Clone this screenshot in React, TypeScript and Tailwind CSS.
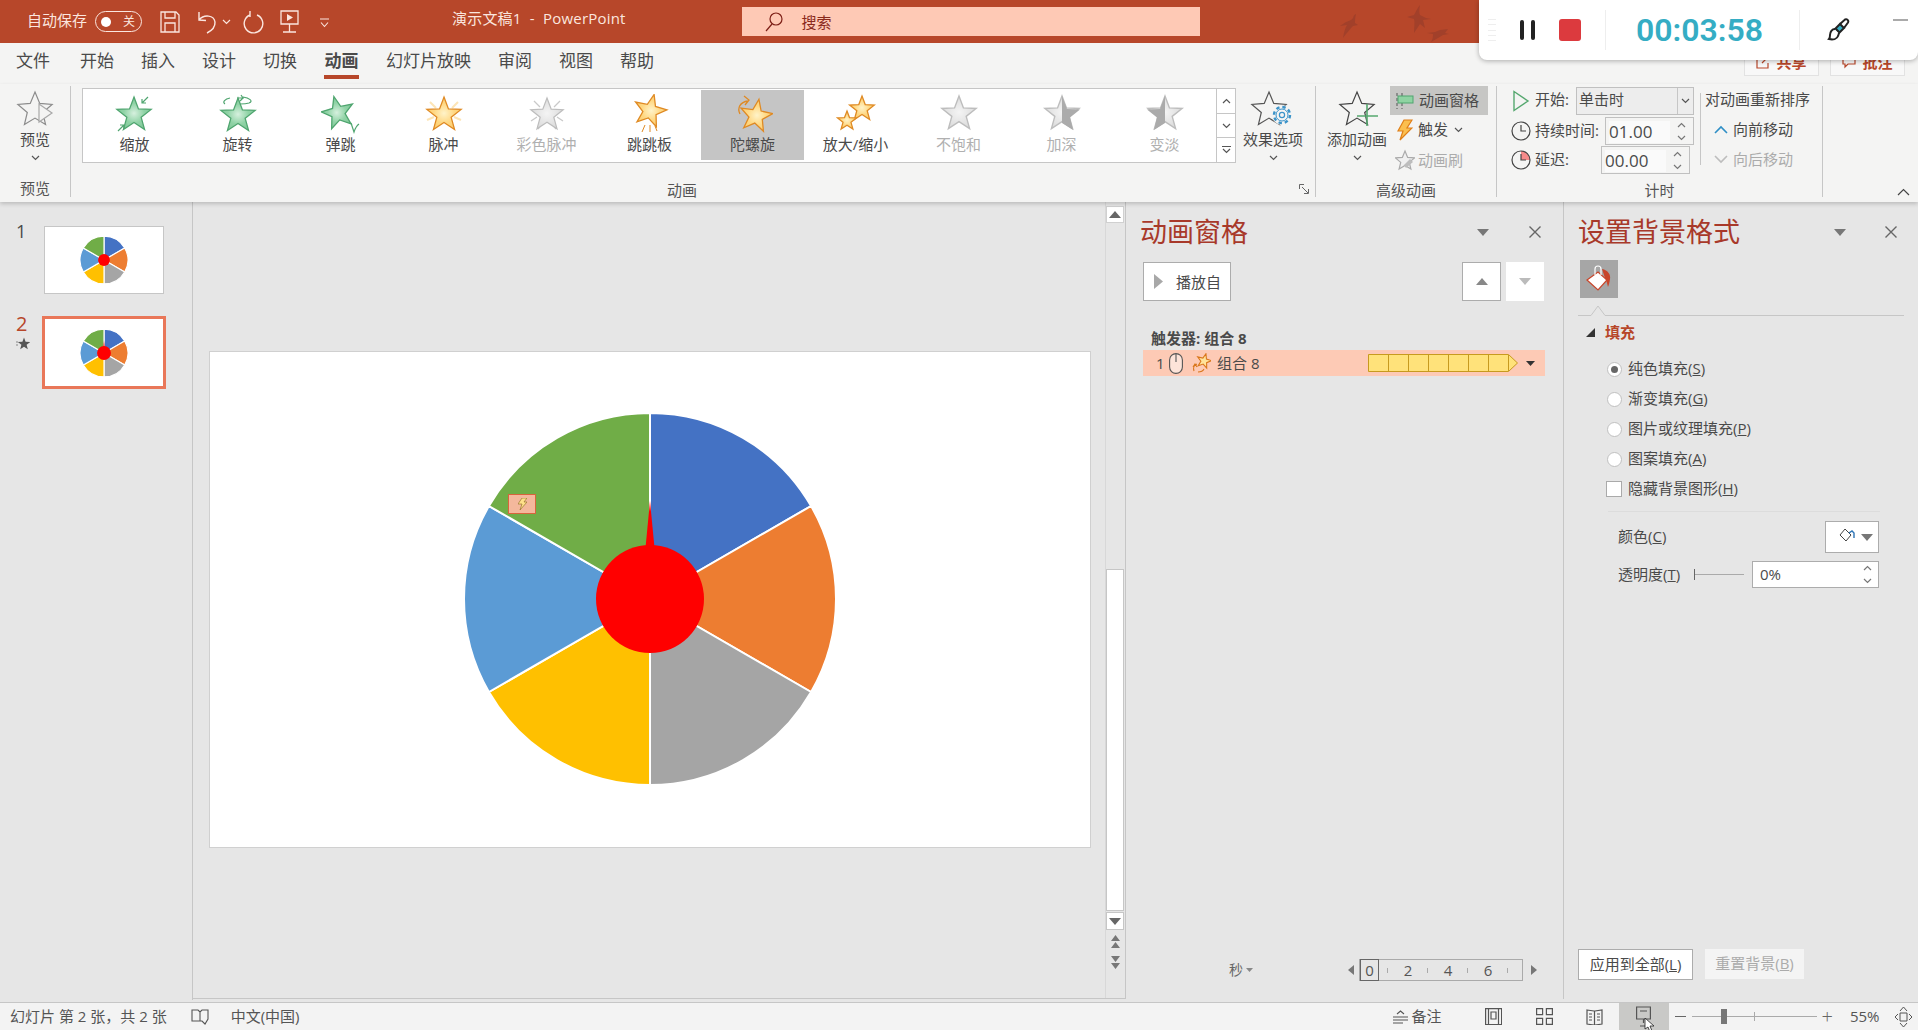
import React from "react";

const starPts = (cx: number, cy: number, R: number, rot = 0, ratio = 0.42) => {
  const p: string[] = [];
  for (let i = 0; i < 10; i++) {
    const r = i % 2 ? R * ratio : R;
    const a = ((-90 + rot + i * 36) * Math.PI) / 180;
    p.push(`${(cx + r * Math.cos(a)).toFixed(2)},${(cy + r * Math.sin(a)).toFixed(2)}`);
  }
  return p.join(" ");
};

const GREEN = { f: "url(#gGreen)", s: "#4fa56f" };
const ORANGE = { f: "url(#gOrange)", s: "#df8a24" };
const GRAY = { f: "url(#gGray)", s: "#bdbdbd" };

const Ico = ({ children }: { children: React.ReactNode }) => (
  <svg width="40" height="40" viewBox="0 0 40 40" fill="none">{children}</svg>
);

const Defs = () => (
  <svg className="absolute w-0 h-0">
    <defs>
      <radialGradient id="gGreen"><stop offset="0" stopColor="#d6f0de" /><stop offset="0.6" stopColor="#90d3a6" /><stop offset="1" stopColor="#82c99a" /></radialGradient>
      <radialGradient id="gOrange"><stop offset="0" stopColor="#fff3c9" /><stop offset="0.6" stopColor="#ffd883" /><stop offset="1" stopColor="#fdcf72" /></radialGradient>
      <radialGradient id="gGray"><stop offset="0" stopColor="#f4f4f4" /><stop offset="1" stopColor="#dcdcdc" /></radialGradient>
    </defs>
  </svg>
);

const GalleryItem = ({ label, dim, sel, children }: { label: string; dim?: boolean; sel?: boolean; children: React.ReactNode }) => (
  <div className={`w-[103px] h-[70px] flex flex-col items-center ${sel ? "bg-[#c5c5c5]" : ""}`}>
    <div className="mt-[4px] h-[40px]">{children}</div>
    <span className={`text-[15px] leading-[20px] ${dim ? "text-[#b0b0b0]" : "text-[#4a4a4a]"}`}>{label}</span>
  </div>
);

const Chev = ({ up, color = "#555" }: { up?: boolean; color?: string }) => (
  <svg width="9" height="6" viewBox="0 0 9 6" fill="none" stroke={color} strokeWidth="1.2">
    <path d={up ? "M1 5l3.5-3.5L8 5" : "M1 1l3.5 3.5L8 1"} />
  </svg>
);

const Tri = ({ color = "#777", up }: { color?: string; up?: boolean }) => (
  <svg width="12" height="7" viewBox="0 0 12 7"><path d={up ? "M0 7L6 0l6 7z" : "M0 0h12L6 7z"} fill={color} /></svg>
);

const X = () => (
  <svg width="12" height="12" viewBox="0 0 12 12" stroke="#666" strokeWidth="1.4"><path d="M0.5 0.5l11 11M11.5 0.5l-11 11" /></svg>
);

const Wheel = ({ size, stroke, red, pointer }: { size: number; stroke: number; red: number; pointer?: boolean }) => {
  const R = 186;
  const cols = ["#4472c4", "#ed7d31", "#a5a5a5", "#ffc000", "#5b9bd5", "#70ad47"];
  const pt = (deg: number) => {
    const a = (deg * Math.PI) / 180;
    return `${(R * Math.cos(a)).toFixed(2)} ${(R * Math.sin(a)).toFixed(2)}`;
  };
  return (
    <svg width={size} height={size} viewBox="-187 -187 374 374">
      {cols.map((c, i) => (
        <path key={c} d={`M0 0L${pt(-90 + i * 60)}A${R} ${R} 0 0 1 ${pt(-30 + i * 60)}Z`} fill={c} stroke="#fff" strokeWidth={stroke} />
      ))}
      {pointer && <path d="M-5 -46L0 -98L5 -46Z" fill="#ff0000" />}
      <circle r={red} fill="#ff0000" />
    </svg>
  );
};

const Radio = ({ on, children }: { on?: boolean; children: React.ReactNode }) => (
  <div className="h-[30px] flex items-center pl-[43px]">
    <span className="w-[15px] h-[15px] rounded-full bg-white border border-[#c0c0c0] flex items-center justify-center">
      {on && <span className="w-[7px] h-[7px] rounded-full bg-[#666]" />}
    </span>
    <span className="ml-[6px] -mt-[2px] text-[15px] leading-[20px] text-[#4a4a4a]">{children}</span>
  </div>
);

const Spin = () => (
  <div className="w-[22px] h-full flex flex-col items-center justify-center gap-[7px]">
    <Chev up color="#777" />
    <Chev color="#777" />
  </div>
);

const Tab = ({ t, cls }: { t: string; cls: string }) => (
  <span className={`mt-[6px] text-[17px] leading-[24px] text-[#4a4a4a] ${cls}`}>{t}</span>
);

export default function App() {
  return (
    <div className="relative w-[1918px] h-[1030px] overflow-hidden flex flex-col bg-[#e6e6e6] text-[#4a4a4a] font-['Open_Sans','Noto_Sans_CJK_SC',sans-serif]">
      <Defs />

      {/* title bar */}
      <div className="h-[43px] shrink-0 bg-[#b7472a] flex items-center text-[#fbe6df]">
        <span className="ml-[27px] -mt-[4px] w-[60px] text-[15px] leading-[20px]">自动保存</span>
        <div className="ml-[8px] w-[47px] h-[21px] rounded-full border border-[#fbe6df] flex items-center justify-between pl-[5px] pr-[6px]">
          <span className="w-[10px] h-[10px] rounded-full bg-white" />
          <span className="text-[12px] leading-[14px]">关</span>
        </div>
        <svg className="ml-[18px]" width="20" height="22" viewBox="0 0 20 22" fill="none" stroke="#fbe6df" strokeWidth="1.3">
          <path d="M1 1h15l3 3v17H1z" /><path d="M5 1v6h10V1M5 21v-9h10v9" />
        </svg>
        <svg className="ml-[17px]" width="20" height="24" viewBox="0 0 20 24" fill="none" stroke="#fbe6df" strokeWidth="1.4">
          <path d="M2 2v8l7 .5M2 10c5-6 15-5 16 2 .4 5-4 9-8 11" />
        </svg>
        <span className="ml-[5px]"><Chev color="#fbe6df" /></span>
        <svg className="ml-[12px]" width="21" height="24" viewBox="0 0 21 24" fill="none" stroke="#fbe6df" strokeWidth="1.4">
          <path d="M14 5a9.3 9.3 0 1 1-7 0M7 1v6" />
        </svg>
        <svg className="ml-[16px]" width="19" height="23" viewBox="0 0 19 23" fill="none" stroke="#fbe6df" strokeWidth="1.3">
          <path d="M1 1h17v13H1zM9.500 14v8M3 22h13" /><path d="M7 4l6 3.500-6 3.500z" fill="#fbe6df" stroke="none" />
        </svg>
        <svg className="ml-[21px] mt-[3px]" width="9" height="10" viewBox="0 0 9 10" fill="none" stroke="#fbe6df" strokeWidth="1.1">
          <path d="M0 1h9M1 4.500l3.500 4 3.500-4" />
        </svg>
        <span className="ml-[123px] text-[15px] leading-[20px] mt-[-7px] whitespace-pre tracking-[0.2px]">演示文稿1  -  PowerPoint</span>
        <div className="ml-[116px] w-[458px] h-[29px] bg-[#fec9b5] flex items-center">
          <svg className="ml-[23px]" width="18" height="20" viewBox="0 0 18 20" fill="none" stroke="#7d1f16" strokeWidth="1.2">
            <circle cx="11" cy="7" r="6" /><path d="M7 12L1 19" />
          </svg>
          <span className="ml-[19px] text-[15px] leading-[20px] text-[#8a2a1c]">搜索</span>
        </div>
        <svg className="ml-[135px]" width="125" height="43" viewBox="0 0 125 43" fill="#a2402a">
          <path d="M8 38c1-6 2-10 4-13l-7 1 6-4c2-1 5-1 7-4 1-3 2-4 3-4-1 4-1 7-1 9l3 2-5 1c-3 3-7 8-10 12z" />
          <path d="M79 33c0-6 1-11 0-14l-7-2 7-2c2-3 3-7 6-10-1 5-1 8 0 10l6 3 5 1-8 1 2 8-5-4z" />
          <path d="M96 42c2-3 2-6 2-8l-6-1 8-1 5-2 8-1-3 4 4 1-6 1-5 3z" />
        </svg>
      </div>

      {/* tabs */}
      <div className="h-[41px] shrink-0 bg-[#f4f4f3] flex items-start">
        <div className="flex items-start h-[36px]">
          <Tab t="文件" cls="ml-[16px]" />
          <Tab t="开始" cls="ml-[30px]" />
          <Tab t="插入" cls="ml-[27px]" />
          <Tab t="设计" cls="ml-[27px]" />
          <Tab t="切换" cls="ml-[27px]" />
          <div className="ml-[27px] flex flex-col items-center h-[36px] pt-[6px]">
            <span className="text-[17px] leading-[24px] font-bold text-[#4a4a4a]">动画</span>
            <span className="w-[35px] h-[4px] bg-[#b7472a] mt-[2px]" />
          </div>
          <Tab t="幻灯片放映" cls="ml-[27px]" />
          <Tab t="审阅" cls="ml-[27px]" />
          <Tab t="视图" cls="ml-[27px]" />
          <Tab t="帮助" cls="ml-[27px]" />
        </div>
        <div className="ml-auto mt-[5px] mr-[13px] flex gap-[11px]">
          <div className="w-[75px] h-[28px] bg-[#f8f8f8] border border-[#e2e2e2] flex items-center justify-center gap-[6px]">
            <svg width="14" height="14" viewBox="0 0 14 14" fill="none" stroke="#b7472a" strokeWidth="1.2"><path d="M1 3h7M1 3v10h11V8M6 8l6-6" /></svg>
            <span className="text-[15px] leading-[20px] font-bold text-[#b7472a]">共享</span>
          </div>
          <div className="w-[75px] h-[28px] bg-[#f8f8f8] border border-[#e2e2e2] flex items-center justify-center gap-[6px]">
            <svg width="14" height="14" viewBox="0 0 14 14" fill="none" stroke="#b7472a" strokeWidth="1.2"><path d="M1 1h12v8H6l-3 3V9H1z" /></svg>
            <span className="text-[15px] leading-[20px] font-bold text-[#b7472a]">批注</span>
          </div>
        </div>
      </div>

      {/* ribbon */}
      <div className="h-[118px] shrink-0 bg-[#f4f4f3] flex pt-[2px] relative z-10 shadow-[0_2px_4px_rgba(0,0,0,0.18)]">
        {/* preview group */}
        <div className="w-[71px] h-[111px] border-r border-[#c6c6c6] flex flex-col items-center">
          <div className="h-[95px] w-full flex flex-col items-center">
            <svg className="mt-[4px]" width="40" height="40" viewBox="0 0 40 40" fill="none">
              <polygon points={starPts(20, 20, 18, 0, 0.45)} stroke="#8c8c8c" strokeWidth="1.2" fill="#f4f4f3" />
              <path d="M24 22l13 9-13 9z" transform="translate(0 -8)" stroke="#a8a8a8" strokeWidth="1.2" fill="#f4f4f3" />
            </svg>
            <span className="-mt-[1px] text-[15px] leading-[20px]">预览</span>
            <span className="mt-[6px]"><Chev /></span>
          </div>
          <span className="text-[15px] leading-[18px] text-[#555]">预览</span>
        </div>

        {/* animation group */}
        <div className="w-[1245px] h-[111px] border-r border-[#c6c6c6] flex flex-col">
          <div className="h-[95px] flex items-start pl-[11px]">
            <div className="mt-[2px] w-[1154px] h-[75px] bg-white border border-[#c6c6c6] flex">
              <div className="flex mt-px">
                <GalleryItem label="缩放">
                  <Ico>
                    <polygon points={starPts(19, 21, 18)} fill={GREEN.f} stroke={GREEN.s} strokeWidth="1.3" />
                    <path d="M33 3l-6 6m0-4v4h4M3 37l6-6m0 4v-4H5" stroke={GREEN.s} strokeWidth="1.2" />
                  </Ico>
                </GalleryItem>
                <GalleryItem label="旋转">
                  <Ico>
                    <polygon points={starPts(20, 22, 18)} fill={GREEN.f} stroke={GREEN.s} strokeWidth="1.3" />
                    <path d="M12 4c-5 1-8 4-5 6M25 3c6 1 11 4 6 6-3 1-7 1-9 1M19 4h6l-2-3m2 3l-3 3" stroke={GREEN.s} strokeWidth="1.2" />
                  </Ico>
                </GalleryItem>
                <GalleryItem label="弹跳">
                  <Ico>
                    <polygon points={starPts(17, 19, 17, -14)} fill={GREEN.f} stroke={GREEN.s} strokeWidth="1.3" />
                    <path d="M30 29c1 3 2 6 3 9 1-3 2-6 5-8" stroke={GREEN.s} strokeWidth="1.2" />
                  </Ico>
                </GalleryItem>
                <GalleryItem label="脉冲">
                  <Ico>
                    <path d="M6 8l6 6M34 8l-6 6M3 26l7-3M37 26l-7-3" stroke="#fde5b6" strokeWidth="2" />
                    <polygon points={starPts(20, 21, 18)} fill={ORANGE.f} stroke={ORANGE.s} strokeWidth="1.3" />
                  </Ico>
                </GalleryItem>
                <GalleryItem label="彩色脉冲" dim>
                  <Ico>
                    <path d="M7 7l6 6M33 7l-6 6M4 27l6-4M36 27l-6-4M11 35l3-4M29 35l-3-4" stroke="#c9c9c9" strokeWidth="1.3" />
                    <polygon points={starPts(20, 21, 17)} fill={GRAY.f} stroke={GRAY.s} strokeWidth="1.2" />
                  </Ico>
                </GalleryItem>
                <GalleryItem label="跳跳板">
                  <Ico>
                    <polygon points={starPts(20, 17, 17, 14)} fill={ORANGE.f} stroke={ORANGE.s} strokeWidth="1.3" />
                    <path d="M15 31l-3 7M20 31l0 7M25 32l2 5" stroke={ORANGE.s} strokeWidth="1" />
                  </Ico>
                </GalleryItem>
                <GalleryItem label="陀螺旋" sel>
                  <Ico>
                    <path d="M7 20c-3-6 0-12 8-13M11 2l5 4-4 5" stroke={ORANGE.s} strokeWidth="1.3" />
                    <polygon points={starPts(23, 22, 17, 10)} fill={ORANGE.f} stroke={ORANGE.s} strokeWidth="1.3" />
                  </Ico>
                </GalleryItem>
                <GalleryItem label="放大/缩小">
                  <Ico>
                    <polygon points={starPts(26, 15, 13)} fill={ORANGE.f} stroke={ORANGE.s} strokeWidth="1.3" />
                    <polygon points={starPts(11, 27, 10)} fill={ORANGE.f} stroke={ORANGE.s} strokeWidth="1.3" />
                  </Ico>
                </GalleryItem>
                <GalleryItem label="不饱和" dim>
                  <Ico>
                    <polygon points={starPts(20, 20, 18)} fill={GRAY.f} stroke={GRAY.s} strokeWidth="1.4" />
                  </Ico>
                </GalleryItem>
                <GalleryItem label="加深" dim>
                  <Ico>
                    <polygon points={starPts(20, 20, 18)} fill={GRAY.f} stroke={GRAY.s} strokeWidth="1.4" />
                    <path d="M20 2l5 13 13 .5-10 8 3 12.500-11-7z" fill="#ababab" />
                  </Ico>
                </GalleryItem>
                <GalleryItem label="变淡" dim>
                  <Ico>
                    <polygon points={starPts(20, 20, 18)} fill={GRAY.f} stroke={GRAY.s} strokeWidth="1.4" />
                    <path d="M20 2l-5 13-13 .5 10 8-3 12.500 11-7z" fill="#ababab" />
                  </Ico>
                </GalleryItem>
              </div>
              <div className="ml-auto w-[19px] h-full border-l border-[#c6c6c6] flex flex-col">
                <div className="h-[25px] border-b border-[#c6c6c6] flex items-center justify-center"><Chev up /></div>
                <div className="h-[24px] border-b border-[#c6c6c6] flex items-center justify-center"><Chev /></div>
                <div className="flex-1 flex flex-col items-center justify-center gap-[1px]">
                  <span className="w-[9px] h-px bg-[#555]" />
                  <Chev />
                </div>
              </div>
            </div>
            <div className="ml-[6px] w-[62px] flex flex-col items-center">
              <svg className="mt-[4px]" width="48" height="40" viewBox="0 0 48 40" fill="none">
                <polygon points={starPts(20, 20, 18, 0, 0.45)} stroke="#555" strokeWidth="1.2" fill="#f4f4f3" />
                <circle cx="33" cy="25" r="8" stroke="#f4f4f3" strokeWidth="4" fill="#f4f4f3" />
                <circle cx="33" cy="25" r="8" stroke="#3b93c9" strokeWidth="2.4" strokeDasharray="3.4 2.9" />
                <circle cx="33" cy="25" r="6" stroke="#3b93c9" strokeWidth="1" />
                <circle cx="33" cy="25" r="2.600" stroke="#3b93c9" strokeWidth="1.2" />
              </svg>
              <span className="-mt-[1px] text-[15px] leading-[20px] whitespace-nowrap">效果选项</span>
              <span className="mt-[6px]"><Chev /></span>
            </div>
          </div>
          <div className="flex h-[16px]">
            <span className="flex-1 text-center text-[15px] leading-[18px] text-[#555]">动画</span>
            <span className="w-[22px] flex items-center justify-center">
              <svg width="11" height="11" viewBox="0 0 11 11" fill="none" stroke="#666" strokeWidth="1"><path d="M.5 5V.5H5M3 3l6 6M9.500 5v4.500H5" /></svg>
            </span>
          </div>
        </div>

        {/* advanced animation group */}
        <div className="w-[181px] h-[111px] border-r border-[#c6c6c6] flex flex-col">
          <div className="h-[95px] flex">
            <div className="ml-[11px] w-[60px] flex flex-col items-center">
              <svg className="mt-[4px]" width="42" height="40" viewBox="0 0 42 40" fill="none">
                <polygon points={starPts(21, 20, 18, 0, 0.45)} stroke="#444" strokeWidth="1.2" fill="#f4f4f3" />
                <path d="M31 14v22M21 26h21" stroke="#56a86f" strokeWidth="1.6" />
              </svg>
              <span className="-mt-[1px] text-[15px] leading-[20px] whitespace-nowrap">添加动画</span>
              <span className="mt-[6px]"><Chev /></span>
            </div>
            <div className="ml-[3px] w-[98px] flex flex-col">
              <div className="h-[29px] bg-[#c6c6c4] flex items-center pl-[4px]">
                <svg width="20" height="18" viewBox="0 0 20 18" fill="none">
                  <path d="M3 1v16M8 1v16" stroke="#555" strokeWidth="1" strokeDasharray="3 2" />
                  <rect x="4" y="4" width="15" height="7" fill="#8fd3a2" stroke="#4fa56f" />
                </svg>
                <span className="ml-[5px] -mt-[2px] text-[15px] leading-[20px]">动画窗格</span>
              </div>
              <div className="h-[30px] flex items-center pl-[7px]">
                <svg width="16" height="22" viewBox="0 0 16 22"><path d="M7 1h8L10 9h5L3 21l3-9H1z" fill="#fbbf4f" stroke="#e07f18" strokeWidth="1.2" /></svg>
                <span className="ml-[5px] -mt-[2px] text-[15px] leading-[20px]">触发</span>
                <span className="ml-[6px]"><Chev /></span>
              </div>
              <div className="h-[30px] flex items-center pl-[5px]">
                <svg width="20" height="22" viewBox="0 0 20 22" fill="none">
                  <polygon points={starPts(10, 12, 10, 0, 0.45)} stroke="#aaa" strokeWidth="1.2" fill="#f0f0f0" />
                  <path d="M11 19l7-6-3-3-6 6z" fill="#bdbdbd" />
                </svg>
                <span className="ml-[3px] text-[15px] leading-[20px] text-[#ababab]">动画刷</span>
              </div>
            </div>
          </div>
          <span className="h-[16px] text-center text-[15px] leading-[18px] text-[#555]">高级动画</span>
        </div>

        {/* timing group */}
        <div className="w-[326px] h-[111px] border-r border-[#c6c6c6] flex flex-col">
          <div className="h-[95px] flex">
            <div className="w-[198px] pt-px pl-[14px] flex flex-col">
              <div className="h-[28px] flex items-center">
                <svg width="20" height="22" viewBox="0 0 20 22" fill="none"><path d="M3 1.500L17 11 3 20.500z" stroke="#56a86f" strokeWidth="1.4" /></svg>
                <span className="ml-[4px] -mt-[4px] w-[41px] text-[15px] leading-[20px]">开始:</span>
                <div className="w-[118px] h-[28px] bg-[#ededed] border border-[#c0c0c0] flex items-center">
                  <span className="ml-[2px] -mt-[4px] flex-1 text-[15px] leading-[20px]">单击时</span>
                  <span className="w-[16px] h-full border-l border-[#c6c6c6] flex items-center justify-center"><Chev /></span>
                </div>
              </div>
              <div className="mt-[2px] h-[28px] flex items-center">
                <svg width="20" height="20" viewBox="0 0 20 20" fill="none" stroke="#444" strokeWidth="1.2"><circle cx="10" cy="10" r="9" /><path d="M10 4v6h5" /></svg>
                <span className="ml-[4px] -mt-[2px] w-[70px] text-[15px] leading-[20px]">持续时间:</span>
                <div className="w-[89px] h-[28px] bg-[#f4f4f3] border border-[#c0c0c0] flex items-center">
                  <span className="ml-[3px] mt-[1px] w-[61px] h-[22px] bg-[#fafafa] text-[17px] leading-[21px]">01.00</span>
                  <Spin />
                </div>
              </div>
              <div className="mt-px h-[28px] flex items-center">
                <svg width="20" height="20" viewBox="0 0 20 20" fill="none" stroke="#444" strokeWidth="1.2">
                  <path d="M10 1a9 9 0 0 1 9 9h-9z" fill="#f58a8a" stroke="none" /><circle cx="10" cy="10" r="9" /><path d="M10 4v6h5" />
                </svg>
                <span className="ml-[4px] -mt-[2px] w-[66px] text-[15px] leading-[20px]">延迟:</span>
                <div className="w-[89px] h-[28px] bg-[#f4f4f3] border border-[#c0c0c0] flex items-center">
                  <span className="ml-[3px] mt-[1px] w-[61px] h-[22px] bg-[#fafafa] text-[17px] leading-[21px]">00.00</span>
                  <Spin />
                </div>
              </div>
            </div>
            <div className="ml-[5px] mt-[7px] h-[72px] border-l border-[#c6c6c6] pl-[4px] flex flex-col">
              <span className="mt-[-4px] text-[15px] leading-[20px] whitespace-nowrap">对动画重新排序</span>
              <div className="mt-[11px] h-[20px] flex items-center pl-[9px]">
                <svg width="14" height="9" viewBox="0 0 14 9" fill="none" stroke="#2f8fc6" strokeWidth="1.6"><path d="M1 8l6-6 6 6" /></svg>
                <span className="ml-[5px] -mt-[1px] text-[15px] leading-[20px]">向前移动</span>
              </div>
              <div className="mt-[11px] h-[20px] flex items-center pl-[9px]">
                <svg width="14" height="9" viewBox="0 0 14 9" fill="none" stroke="#bdbdbd" strokeWidth="1.6"><path d="M1 1l6 6 6-6" /></svg>
                <span className="ml-[5px] -mt-[1px] text-[15px] leading-[20px] text-[#ababab]">向后移动</span>
              </div>
            </div>
          </div>
          <span className="h-[16px] text-center text-[15px] leading-[18px] text-[#555]">计时</span>
        </div>

        <div className="flex-1 flex justify-end items-end pr-[8px] pb-[6px]">
          <svg width="13" height="8" viewBox="0 0 13 8" fill="none" stroke="#444" strokeWidth="1.2"><path d="M1 7l5.500-5.500L12 7" /></svg>
        </div>
      </div>

      {/* main */}
      <div className="flex-1 min-h-0 flex">
        {/* thumbnails */}
        <div className="w-[193px] h-[798px] border-r border-[#c6c6c6] pt-[24px] flex flex-col">
          <div className="flex ml-[16px]">
            <span className="w-[28px] -mt-[2px] text-[18px] leading-[14px] text-[#4a4a4a]">1</span>
            <div className="w-[120px] h-[68px] bg-white border border-[#c6c6c6] flex items-center justify-center">
              <Wheel size={48} stroke={9} red={46} />
            </div>
          </div>
          <div className="flex ml-[16px] mt-[22px]">
            <div className="w-[26px] flex flex-col">
              <span className="mt-[1px] text-[20px] leading-[14px] text-[#b7472a]">2</span>
              <svg className="mt-[6px]" width="14" height="13" viewBox="0 0 14 13"><polygon points={starPts(8, 7, 6.500)} fill="#555" /><path d="M0 5h2M0 8h2" stroke="#888" /></svg>
            </div>
            <div className="w-[124px] h-[73px] bg-white border-[3px] border-[#e97759] flex items-center justify-center">
              <Wheel size={48} stroke={9} red={54} pointer />
            </div>
          </div>
        </div>

        {/* canvas + scrollbar */}
        <div className="w-[933px] h-[797px] border-b border-r border-[#c6c6c6] flex">
          <div className="w-[912px] h-full flex items-center pl-[16px] pb-[2px]">
            <div className="relative w-[882px] h-[497px] bg-white border border-[#d0d0d0] flex items-center justify-center">
              <Wheel size={374} stroke={2} red={54} pointer />
              <div className="absolute left-[298px] top-[142px] w-[28px] h-[20px] bg-[#f4b89c] border border-[#d8643c] flex items-center justify-center">
                <svg width="9" height="12" viewBox="0 0 9 12"><path d="M4 0h5L6 4h3l-7 8 2-6H0z" fill="#ffe08a" stroke="#8a6a20" strokeWidth=".6" /></svg>
              </div>
            </div>
          </div>
          <div className="w-[19px] h-full border-l border-[#d8d8d8] flex flex-col items-stretch">
            <div className="mt-[4px] h-[17px] bg-white border border-[#d0d0d0] flex items-center justify-center"><Tri color="#666" up /></div>
            <div className="mt-[346px] h-[342px] bg-white border border-[#c6c6c6]" />
            <div className="mt-[1px] h-[18px] bg-white border border-[#c6c6c6] flex items-center justify-center"><Tri color="#666" /></div>
            <div className="mt-[5px] flex flex-col items-center">
              <svg width="11" height="14" viewBox="0 0 11 14" fill="#777"><path d="M5.500 0L10 6H1zM5.500 7L10 13H1z" /></svg>
              <svg className="mt-[6px]" width="11" height="14" viewBox="0 0 11 14" fill="#777"><path d="M1 1h9L5.500 7zM1 8h9l-4.500 6z" /></svg>
            </div>
          </div>
        </div>

        {/* animation pane */}
        <div className="w-[438px] h-[797px] border-r border-[#c6c6c6] flex flex-col">
          <div className="mt-[16px] h-[28px] flex items-center pl-[14px]">
            <span className="text-[27px] leading-[28px] text-[#a8392a]">动画窗格</span>
            <span className="ml-auto"><Tri /></span>
            <span className="ml-[40px] mr-[22px]"><X /></span>
          </div>
          <div className="mt-[16px] h-[39px] flex pl-[17px]">
            <div className="w-[88px] h-[39px] bg-white border border-[#acacac] flex items-center pl-[10px]">
              <svg width="9" height="15" viewBox="0 0 9 15"><path d="M0 0l9 7.500L0 15z" fill="#a8a8a8" /></svg>
              <span className="ml-[13px] text-[15px] leading-[20px]">播放自</span>
            </div>
            <div className="ml-[231px] w-[39px] h-[39px] bg-white border border-[#acacac] flex items-center justify-center"><Tri color="#888" up /></div>
            <div className="ml-[5px] w-[38px] h-[39px] bg-white flex items-center justify-center"><Tri color="#bbb" /></div>
          </div>
          <div className="mt-[27px] h-[20px] pl-[25px] text-[15px] leading-[20px] font-bold text-[#4a4a4a]">触发器: 组合 8</div>
          <div className="mt-[2px] ml-[17px] w-[402px] h-[26px] bg-[#fdcab5] flex items-center">
            <span className="ml-[13px] w-[13px] text-[15px] leading-[20px]">1</span>
            <svg width="14" height="21" viewBox="0 0 14 21" fill="none" stroke="#555" strokeWidth="1.1"><rect x=".6" y=".6" width="12.800" height="19.800" rx="6.400" fill="#fde4d9" /><path d="M7 1v8" /></svg>
            <svg className="ml-[9px]" width="19" height="20" viewBox="0 0 19 20" fill="none">
              <polygon points={starPts(12, 8, 7.500, 15)} fill="#ffe39a" stroke="#d9761a" strokeWidth="1.1" />
              <path d="M2 18c-1-3 0-6 3-7M1 14l2-3 2 3M12 16c-1 2-3 3-6 3" stroke="#d9761a" strokeWidth="1.1" />
            </svg>
            <span className="ml-[6px] text-[15px] leading-[20px]">组合 8</span>
            <svg className="ml-[109px]" width="150" height="18" viewBox="0 0 150 18">
              <path d="M.5.500h140l9 8.500-9 8.500H.5z" fill="#ffe27a" stroke="#c79a1e" />
              <path d="M20.500 1v16M40.500 1v16M60.500 1v16M80.500 1v16M100.500 1v16M120.500 1v16M140.500 1v16" stroke="#c79a1e" />
            </svg>
            <span className="ml-[8px]"><svg width="9" height="5" viewBox="0 0 9 5"><path d="M0 0h9L4.500 5z" fill="#333" /></svg></span>
          </div>
          <div className="flex-1" />
          <div className="mb-[18px] h-[22px] flex items-center">
            <span className="ml-[103px] text-[14px] leading-[20px] text-[#666]">秒</span>
            <span className="ml-[3px]"><svg width="7" height="4" viewBox="0 0 7 4"><path d="M0 0h7L3.500 4z" fill="#888" /></svg></span>
            <svg className="ml-[95px]" width="6" height="10" viewBox="0 0 6 10"><path d="M6 0v10L0 5z" fill="#777" /></svg>
            <div className="ml-[5px] w-[164px] h-[22px] border border-[#aaa] flex items-center text-[15px] leading-[20px] text-[#555]">
              <span className="w-[19px] h-[22px] border border-[#666] text-center shrink-0">0</span>
              <span className="ml-[8px] w-px h-[5px] bg-[#aaa]" />
              <span className="ml-[10px] w-[20px] text-center">2</span>
              <span className="ml-[9px] w-px h-[5px] bg-[#aaa]" />
              <span className="ml-[10px] w-[20px] text-center">4</span>
              <span className="ml-[9px] w-px h-[5px] bg-[#aaa]" />
              <span className="ml-[10px] w-[20px] text-center">6</span>
              <span className="ml-[9px] w-px h-[5px] bg-[#aaa]" />
            </div>
            <svg className="ml-[8px]" width="6" height="10" viewBox="0 0 6 10"><path d="M0 0v10l6-5z" fill="#777" /></svg>
          </div>
        </div>

        {/* format pane */}
        <div className="flex-1 h-[800px] flex flex-col">
          <div className="mt-[16px] h-[28px] flex items-center pl-[14px]">
            <span className="text-[27px] leading-[28px] text-[#a8392a]">设置背景格式</span>
            <span className="ml-[94px]"><Tri /></span>
            <span className="ml-[39px]"><X /></span>
          </div>
          <div className="mt-[14px] ml-[16px] w-[38px] h-[38px] bg-[#a6a6a6] flex items-center justify-center">
            <svg width="28" height="28" viewBox="0 0 28 28" fill="none">
              <path d="M2 15L13 7l9 8-9 10z" fill="#fff" stroke="#c8452a" strokeWidth="1.2" />
              <path d="M13 1a3 3 0 0 0-3 3v6M13 1a3 3 0 0 1 3 3v6" stroke="#fff" strokeWidth="1.2" />
              <path d="M17 4c6 1 9 6 8 10-.5 3-1 6-2 8-1-3-1-6-3-9z" fill="#c8452a" />
            </svg>
          </div>
          <svg className="mt-[6px] ml-[14px]" width="326" height="12" viewBox="0 0 326 12" fill="none" stroke="#c6c6c6">
            <path d="M0 11.500h13L20 2l7 9.500h299" />
          </svg>
          <div className="h-[32px] flex items-center pl-[22px]">
            <svg width="9" height="9" viewBox="0 0 9 9"><path d="M9 0v9H0z" fill="#333" /></svg>
            <span className="ml-[10px] text-[15px] leading-[20px] font-bold text-[#b7472a]">填充</span>
          </div>
          <div className="mt-[6px]">
            <Radio on>纯色填充(<u>S</u>)</Radio>
            <Radio>渐变填充(<u>G</u>)</Radio>
            <Radio>图片或纹理填充(<u>P</u>)</Radio>
            <Radio>图案填充(<u>A</u>)</Radio>
            <div className="h-[30px] flex items-center pl-[42px]">
              <span className="w-[16px] h-[16px] bg-white border border-[#aaa]" />
              <span className="ml-[6px] -mt-[2px] text-[15px] leading-[20px]">隐藏背景图形(<u>H</u>)</span>
            </div>
          </div>
          <div className="mt-[7px] ml-[44px] w-[272px] h-px bg-[#dcdcdc]" />
          <div className="mt-[9px] h-[32px] flex items-center pl-[54px]">
            <span className="-mt-[2px] text-[15px] leading-[20px]">颜色(<u>C</u>)</span>
            <div className="ml-auto mr-[39px] w-[54px] h-[32px] bg-white border border-[#acacac] flex items-center pl-[13px]">
              <svg className="-mt-[4px]" width="16" height="15" viewBox="0 0 16 15" fill="none"><path d="M1 7l5-6 6 6-5 6z" stroke="#444" /><path d="M10 5l3-2 2 2v5" stroke="#2e75b6" strokeWidth="1.4" /></svg>
              <span className="ml-[6px]"><Tri color="#777" /></span>
            </div>
          </div>
          <div className="mt-[8px] h-[27px] flex items-center pl-[54px]">
            <span className="-mt-[2px] w-[76px] text-[15px] leading-[20px] whitespace-nowrap">透明度(<u>T</u>)</span>
            <span className="w-px h-[11px] bg-[#666]" />
            <span className="w-[49px] h-px bg-[#aaa]" />
            <div className="ml-[8px] w-[127px] h-[27px] bg-white border border-[#acacac] flex items-center pl-[7px]">
              <span className="-mt-[1px] flex-1 text-[15px] leading-[20px]">0%</span>
              <Spin />
            </div>
          </div>
          <div className="flex-1" />
          <div className="mb-[22px] ml-[14px] flex">
            <div className="w-[115px] h-[31px] bg-white border border-[#acacac] flex items-center justify-center text-[15px] leading-[20px] pb-[2px]"><span>应用到全部(<u>L</u>)</span></div>
            <div className="ml-[12px] w-[99px] h-[30px] bg-[#f4f4f4] flex items-center justify-center text-[15px] leading-[20px] pb-[2px] text-[#ababab]"><span>重置背景(<u>B</u>)</span></div>
          </div>
        </div>
      </div>

      {/* status bar */}
      <div className="h-[28px] shrink-0 bg-[#f3f3f3] border-t border-[#c6c6c6] flex items-center text-[15px] leading-[20px] text-[#555] relative z-10">
        <span className="ml-[10px] -mt-[2px] whitespace-pre">幻灯片 第 2 张，共 2 张</span>
        <svg className="ml-[24px]" width="18" height="16" viewBox="0 0 18 16" fill="none" stroke="#555" strokeWidth="1.1"><path d="M1 1h6l2 2 2-2h6v9l-3 5-3-3H1zM9 3v9" /></svg>
        <span className="ml-[22px] -mt-[2px]">中文(中国)</span>
        <svg className="ml-[1093px]" width="15" height="14" viewBox="0 0 15 14" fill="none" stroke="#555" strokeWidth="1.1"><path d="M4 4l3.500-3L11 4M0 7h15M0 10h15M0 13h10" /></svg>
        <span className="ml-[4px] -mt-[2px]">备注</span>
        <svg className="ml-[43px]" width="17" height="17" viewBox="0 0 17 17" fill="none" stroke="#555" strokeWidth="1.2"><path d="M.6.600h16v16H.6zM3.500.6v16M13.500.6v16M6 4h5v7H6z" /></svg>
        <svg className="ml-[34px]" width="17" height="17" viewBox="0 0 17 17" fill="none" stroke="#555" strokeWidth="1.2"><path d="M.6.600h6v6h-6zM10.400.6h6v6h-6zM.6 10.400h6v6h-6zM10.400 10.400h6v6h-6z" /></svg>
        <svg className="ml-[33px]" width="17" height="17" viewBox="0 0 17 17" fill="none" stroke="#555" strokeWidth="1.2"><path d="M1 2l7 1 1 0 7-1v14l-7 1-1 0-7-1zM8.500 3v14M3 6h3M3 9h3M3 12h3M11 6h3M11 9h3M11 12h3" /></svg>
        <div className="ml-[16px] w-[50px] h-[27px] bg-[#c9c9c7] flex items-center justify-center relative">
          <svg width="15" height="21" viewBox="0 0 15 21" fill="none" stroke="#555" strokeWidth="1.2"><path d="M.6 1h13.800v12H.6zM4 5h7M7.500 13v4M4 20h7" /></svg>
          <svg className="absolute left-[25px] top-[15px]" width="12" height="14" viewBox="0 0 12 14"><path d="M1 0v11l3-2 2 5 2-1-2-5h4z" fill="#fff" stroke="#222" strokeWidth=".8" /></svg>
        </div>
        <span className="ml-[6px] w-[11px] h-px bg-[#666]" />
        <div className="ml-[6px] w-[125px] h-[16px] flex items-center relative">
          <span className="w-full h-px bg-[#aaa]" />
          <span className="absolute left-[29px] w-[6px] h-[15px] bg-[#777]" />
          <span className="absolute left-[62px] w-px h-[9px] bg-[#aaa]" />
        </div>
        <span className="ml-[5px] text-[20px] leading-[20px] text-[#666] font-light">+</span>
        <span className="ml-[17px] -mt-[2px]">55%</span>
        <svg className="ml-[14px]" width="19" height="22" viewBox="0 0 19 22" fill="none" stroke="#555" strokeWidth="1"><path d="M6 5l3.500-4L13 5M6 17l3.500 4 3.500-4M4 8l-3 3 3 3M15 8l3 3-3 3M6 7h7v8H6z" /></svg>
      </div>

      {/* floating recorder */}
      <div className="absolute top-0 right-0 z-20 w-[439px] h-[60px] bg-white rounded-bl-[8px] rounded-br-[8px] shadow-[0_1px_5px_rgba(0,0,0,0.3)] flex items-center">
        <div className="ml-[9px] w-[8px] h-[22px] flex flex-col justify-between">
          <span className="h-px bg-[#eee]" /><span className="h-px bg-[#eee]" /><span className="h-px bg-[#eee]" /><span className="h-px bg-[#eee]" /><span className="h-px bg-[#eee]" />
        </div>
        <div className="ml-[24px] flex gap-[7px]">
          <span className="w-[4px] h-[20px] rounded-full bg-[#222]" />
          <span className="w-[4px] h-[20px] rounded-full bg-[#222]" />
        </div>
        <span className="ml-[24px] w-[22px] h-[22px] rounded-[3px] bg-[#dc3a3e]" />
        <span className="ml-[24px] w-px h-[40px] bg-[#eee]" />
        <span className="ml-[30px] w-[131px] text-[32px] leading-[40px] font-semibold text-[#35adc4] font-['Roboto',sans-serif]">00:03:58</span>
        <span className="ml-[32px] w-px h-[40px] bg-[#eee]" />
        <svg className="ml-[27px]" width="24" height="24" viewBox="0 0 24 24" fill="none" stroke="#222" strokeWidth="2">
          <path d="M13 6l5-4.500c2-1 4 1 3 3L17 10" />
          <path d="M13 6l-5 5 4 4 5-5z" fill="#35adc4" stroke="none" />
          <path d="M13 6l4 4-4.500 4.500-4-4z" />
          <path d="M8 11c-3 0-5 3-5 6 0 3-1 4-1 4 4 1 8 0 9-3 .5-1 1-3 1-3" />
        </svg>
        <span className="ml-[42px] w-[15px] h-[2px] bg-[#aaa] mt-[-20px]" />
      </div>
    </div>
  );
}
